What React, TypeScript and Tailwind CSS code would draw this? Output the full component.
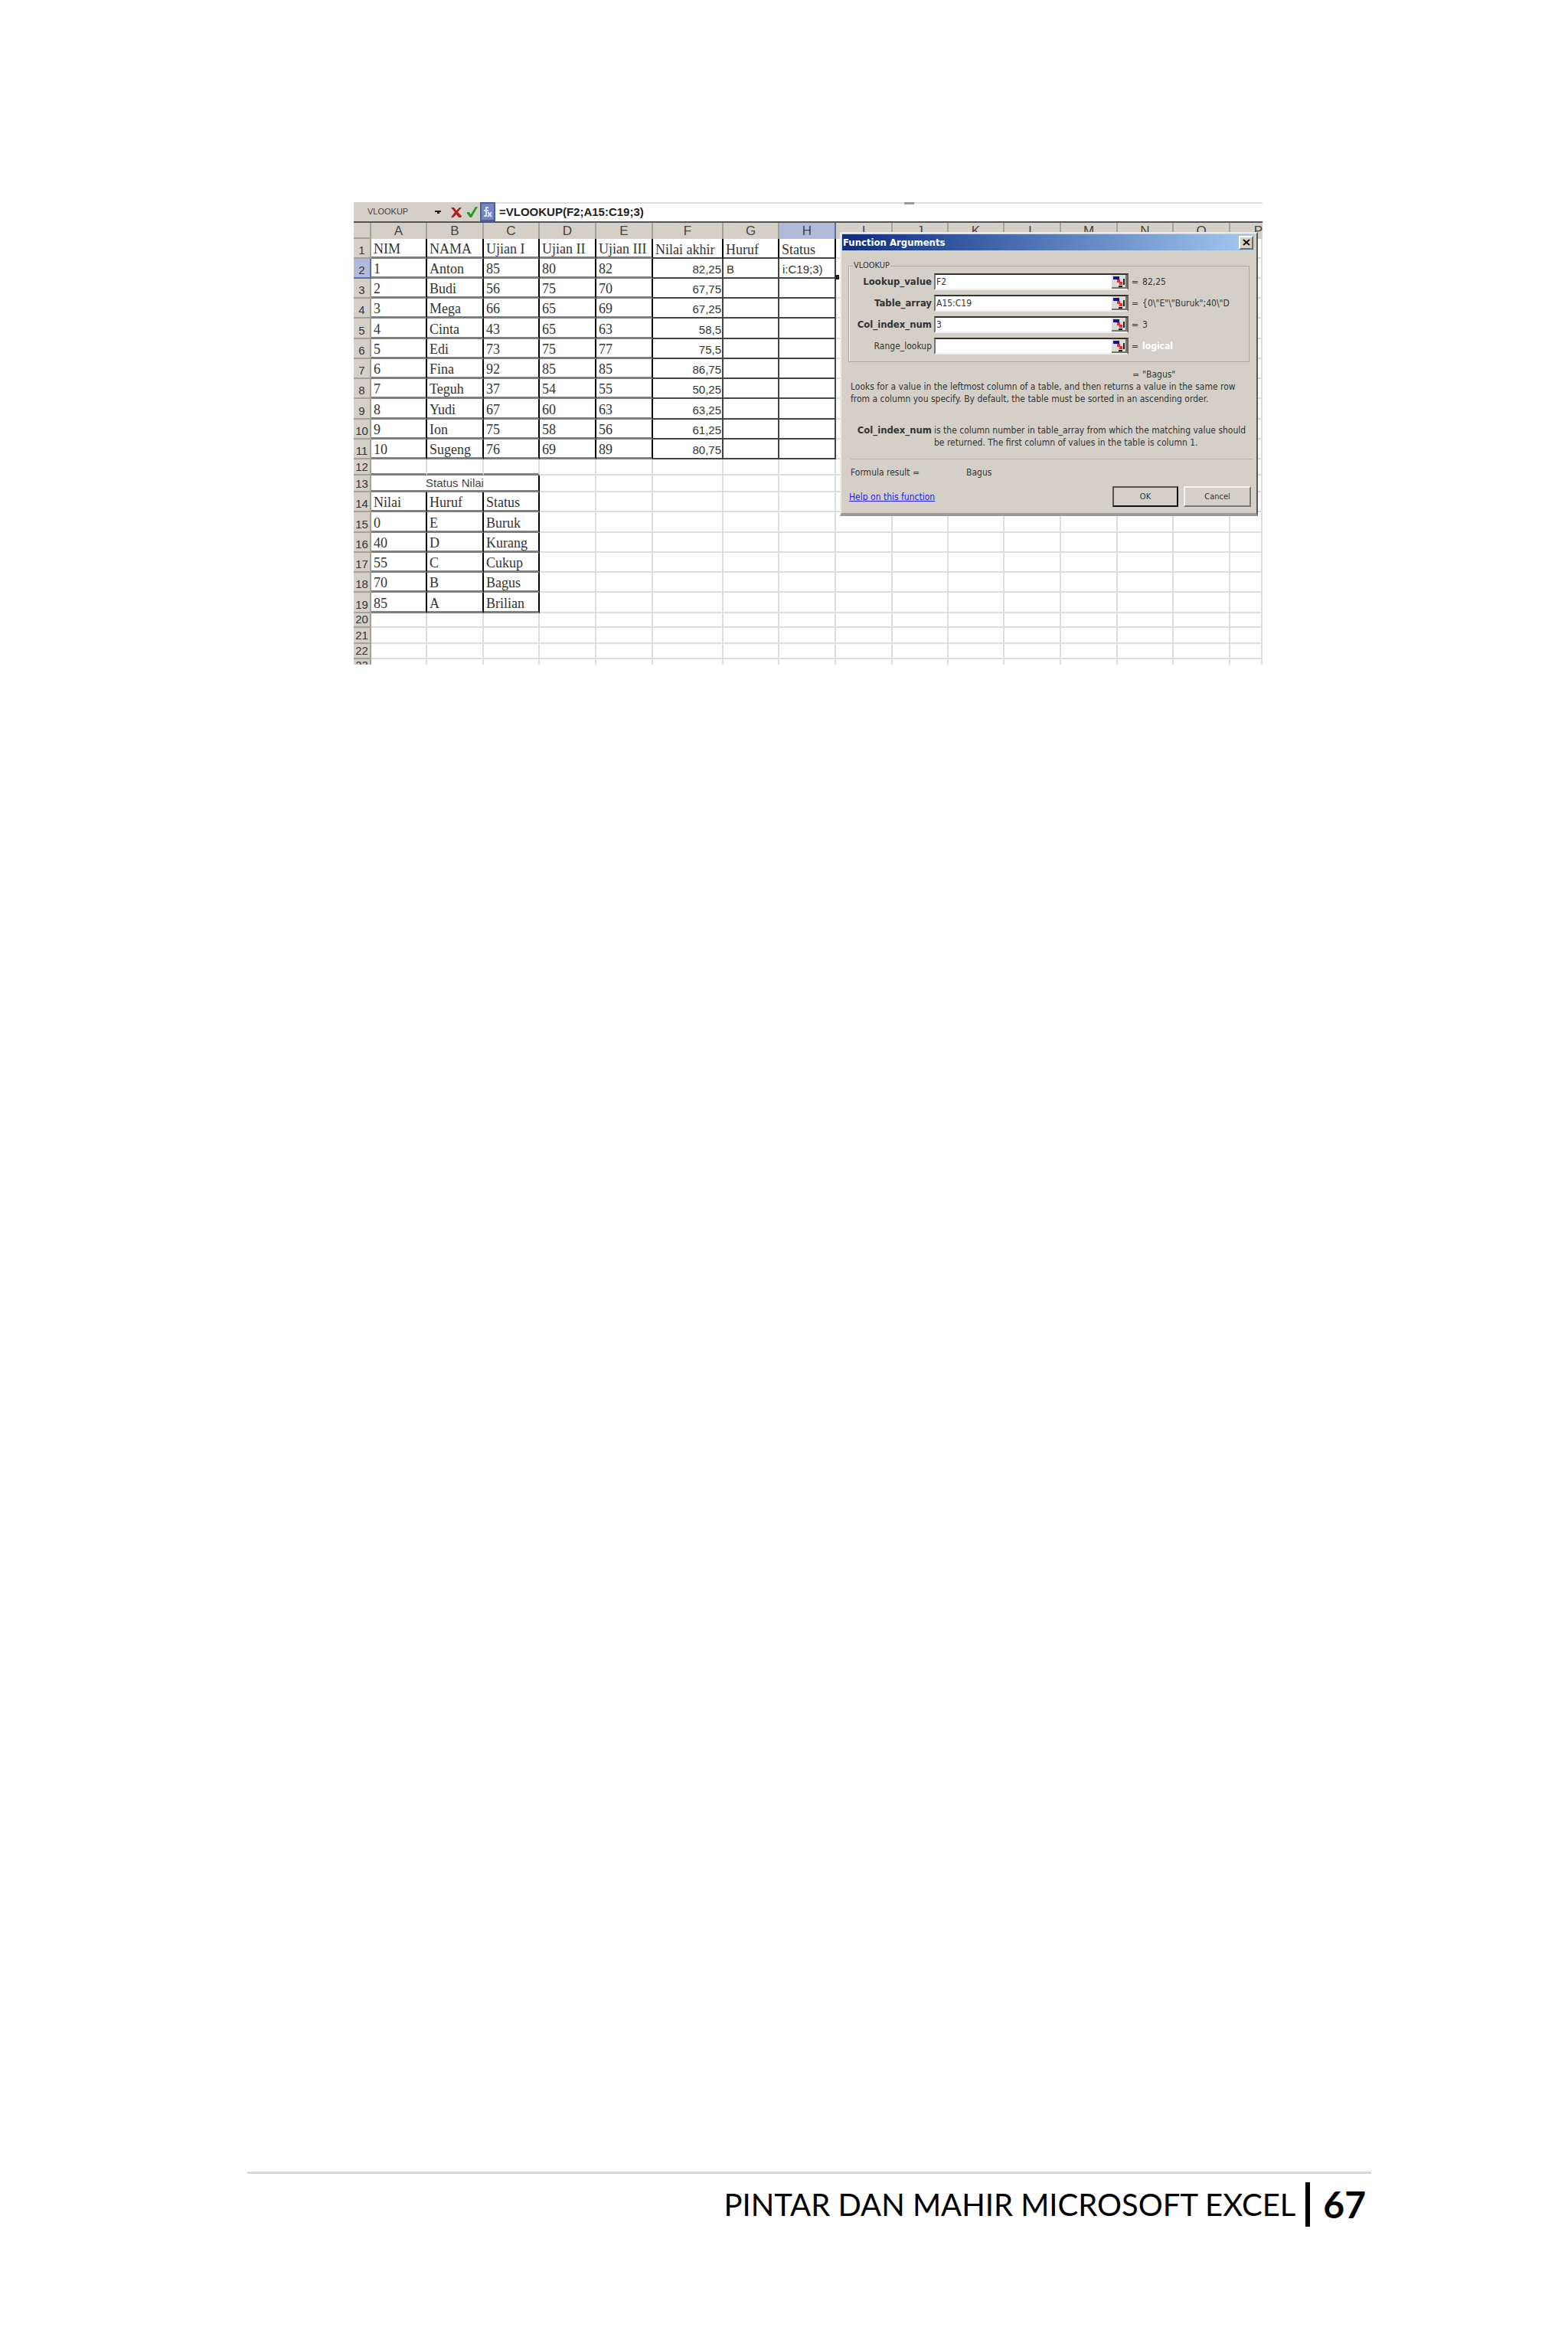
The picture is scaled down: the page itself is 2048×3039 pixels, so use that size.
import { Fragment } from "react";

const columns = [
  { name: "A", width: "w-[73px]" },
  { name: "B", width: "w-[74px]" },
  { name: "C", width: "w-[73px]" },
  { name: "D", width: "w-[74px]" },
  { name: "E", width: "w-[74px]" },
  { name: "F", width: "w-[92px]" },
  { name: "G", width: "w-[73px]" },
  { name: "H", width: "w-[74px]" },
  { name: "I", width: "w-[74px]" },
  { name: "J", width: "w-[73px]" },
  { name: "K", width: "w-[73px]" },
  { name: "L", width: "w-[74px]" },
  { name: "M", width: "w-[74px]" },
  { name: "N", width: "w-[73px]" },
  { name: "O", width: "w-[74px]" },
  { name: "P", width: "" },
];

const rows: { h: string; cells: string[] }[] = [
  { h: "h-[26px]", cells: ["NIM", "NAMA", "Ujian I", "Ujian II", "Ujian III", "Nilai akhir", "Huruf", "Status"] },
  { h: "h-[26px]", cells: ["1", "Anton", "85", "80", "82", "82,25", "B", "i:C19;3)"] },
  { h: "h-[26px]", cells: ["2", "Budi", "56", "75", "70", "67,75"] },
  { h: "h-[26px]", cells: ["3", "Mega", "66", "65", "69", "67,25"] },
  { h: "h-[27px]", cells: ["4", "Cinta", "43", "65", "63", "58,5"] },
  { h: "h-[26px]", cells: ["5", "Edi", "73", "75", "77", "75,5"] },
  { h: "h-[26px]", cells: ["6", "Fina", "92", "85", "85", "86,75"] },
  { h: "h-[26px]", cells: ["7", "Teguh", "37", "54", "55", "50,25"] },
  { h: "h-[27px]", cells: ["8", "Yudi", "67", "60", "63", "63,25"] },
  { h: "h-[26px]", cells: ["9", "Ion", "75", "58", "56", "61,25"] },
  { h: "h-[26px]", cells: ["10", "Sugeng", "76", "69", "89", "80,75"] },
  { h: "h-[21px]", cells: [] },
  { h: "h-[22px]", cells: ["Status Nilai"] },
  { h: "h-[26px]", cells: ["Nilai", "Huruf", "Status"] },
  { h: "h-[27px]", cells: ["0", "E", "Buruk"] },
  { h: "h-[26px]", cells: ["40", "D", "Kurang"] },
  { h: "h-[26px]", cells: ["55", "C", "Cukup"] },
  { h: "h-[26px]", cells: ["70", "B", "Bagus"] },
  { h: "h-[27px]", cells: ["85", "A", "Brilian"] },
  { h: "h-[19px]", cells: [] },
  { h: "h-[21px]", cells: [] },
  { h: "h-[20px]", cells: [] },
  { h: "h-[7px]", cells: [] },
];

function cellStyle(row: number, col: number) {
  // scores, columns A-E
  if (row <= 11 && col < 5) {
    return "border-r-2 border-b-3 border-r-black border-b-[#7f7f7f]";
  }
  if (row <= 11 && col < 8) {
    return row === 1
      ? "border-r-2 border-b-2 border-r-black border-b-[#444]"
      : "border-r-2 border-b-2 border-[#444]";
  }
  if (row === 12 && col < 3) {
    return "border-r-2 border-b-3 border-r-[#dedede] border-b-[#7f7f7f]";
  }
  // lookup table, columns A-C
  if (row >= 13 && row <= 19 && col < 3) {
    return "border-r-2 border-b-3 border-r-black border-b-[#7f7f7f]";
  }
  return "border-r-2 border-b-2 border-[#dedede]";
}

function fontStyle(row: number, col: number) {
  if (row > 1 && row < 12 && col === 5) return "pr-px text-right font-['Liberation_Sans',sans-serif] text-[15px]";
  if (row > 1 && row < 12 && col > 5) return "pl-1 font-['Liberation_Sans',sans-serif] text-[15px]";
  return "pl-[3px] font-['Liberation_Serif',serif] text-[18px]";
}

function Row({ index }: { index: number }) {
  const { h, cells } = rows[index];
  const n = index + 1;
  const merged = n === 13;
  const cols = columns.map((_, i) => i).filter((i) => !merged || i > 2);

  return (
    <tr className={h}>
      <th
        scope="row"
        className={`p-0 align-bottom text-[15px] leading-[15px] font-normal text-[#333] ${
          n === 2 ? "border-[#5b6fb5] bg-[#b1bbd9]" : "border-[#a5a299] bg-[#d4d0c8]"
        } ${n === 23 ? "border-r-2" : "border-r-2 border-b-2 pb-[2px]"}`}
      >
        {n === 23 ? <div className="h-[7px] overflow-hidden">23</div> : n}
      </th>
      {merged && (
        <td
          colSpan={3}
          className="border-r-2 border-b-3 border-r-black border-b-[#7f7f7f] p-0 text-center align-bottom text-[15px] leading-[18px] text-[#444]"
        >
          {cells[0]}
        </td>
      )}
      {cols.map((c) => (
        <td
          key={c}
          className={`p-0 align-bottom leading-[18px] whitespace-nowrap text-[#333] ${
            n === 23 ? "border-r-2 border-[#dedede]" : cellStyle(n, c)
          } ${cells[c] && !merged ? "pb-px" : ""} ${fontStyle(n, c)}`}
        >
          {merged ? "" : cells[c]}
        </td>
      ))}
    </tr>
  );
}

function FormulaBar() {
  return (
    <div className="flex h-[27px] items-stretch border-b-2 border-[#555] bg-white">
      <div className="flex w-[165px] items-center bg-[#d4d0c8]">
        <span className="w-[105px] pl-[18px] text-[11px] text-[#444]">VLOOKUP</span>
        <svg viewBox="0 0 10 6" className="h-[6px] w-[10px]">
          <path d="M1 1h8v2H7v2H4V3H1z" fill="#222" />
        </svg>
        <svg viewBox="0 0 16 14" className="ml-[11px] h-[14px] w-[16px]">
          <path d="M1 1l4 0 3 4 4-4h3l-5 6 5 5-1 2h-3l-3-4-4 4H1l5-7z" fill="#b21c24" />
        </svg>
        <svg viewBox="0 0 16 15" className="ml-[5px] h-[15px] w-[16px]">
          <path d="M1 8h3l2 3 6-10h3l-8 14H5L1 10z" fill="#25992b" />
        </svg>
      </div>
      <button type="button" aria-label="Insert function" className="flex w-[20px] items-center justify-center border-2 border-[#4a5fa5] bg-[#7587bd]">
        <svg viewBox="0 0 14 16" className="h-[16px] w-[14px]" fill="none" stroke="#d8e0f4" strokeWidth="2">
          <path d="M8 2H5v11H2M2 6h6M7 8l5 6M12 8l-5 6" />
        </svg>
      </button>
      <div className="flex flex-1 items-center border-t-2 border-[#dedede] pl-[5px] text-[15px] font-bold text-[#222]">
        =VLOOKUP(F2;A15:C19;3)
      </div>
    </div>
  );
}

const args = [
  { id: "lookup", label: "Lookup_value", value: "F2", result: "82,25", bold: true },
  { id: "table", label: "Table_array", value: "A15:C19", result: "{0\\\"E\"\\\"Buruk\";40\\\"D", bold: true },
  { id: "col", label: "Col_index_num", value: "3", result: "3", bold: true },
  { id: "range", label: "Range_lookup", value: "", result: "logical", bold: false },
];

function PickerIcon() {
  return (
    <svg viewBox="0 0 20 18" className="h-[18px] w-[20px]">
      <path d="M0 0h20v18H0z" fill="#dddbd6" />
      <path d="M18 0h2v18H0v-2h18z" fill="#77756f" />
      <path d="M2 2h8v4H2z" fill="#16168a" />
      <path d="M7 6h4v3h3v4h-4v-3H7z" fill="#ef2b2b" />
      <path d="M9 14h5v2H9zM15 5h2v8h-2z" fill="#222" />
    </svg>
  );
}

function FunctionDialog() {
  return (
    <div
      role="dialog"
      aria-labelledby="dialog-title"
      className="absolute top-[39px] right-[6px] left-[635px] h-[371px] border-t-2 border-r-2 border-b-4 border-l-2 border-t-[#eceae5] border-r-[#555] border-b-[#9b9993] border-l-[#eceae5] bg-[#d4d0c8] font-['DejaVu_Sans_Condensed','Noto_Sans',sans-serif] text-[12px] leading-4 text-[#333]"
    >
      <div className="mt-px mr-[3px] ml-px flex h-[21px] items-center justify-between bg-linear-to-r from-[#0f2a80] to-[#a6caf0]">
        <h2 id="dialog-title" className="pl-px text-[13px] font-bold text-white">
          Function Arguments
        </h2>
        <button
          type="button"
          aria-label="Close"
          className="mr-px flex h-[18px] w-[19px] items-center justify-center border-2 border-t-white border-r-[#6f6d68] border-b-[#6f6d68] border-l-white bg-[#d4d0c8]"
        >
          <svg viewBox="0 0 10 9" className="h-[9px] w-[10px]" stroke="#111" strokeWidth="2">
            <path d="M1 1l8 7M9 1l-8 7" />
          </svg>
        </button>
      </div>

      <fieldset className="mx-[9px] mt-[12px] h-[134px] border border-[#aaa79f] shadow-[inset_1px_0_0_#fff]">
        <legend className="ml-[5px] px-px text-[11px]">VLOOKUP</legend>
        <div className="grid grid-cols-[108px_257px_1fr] gap-y-[6px] pt-[2px]">
          {args.map((a) => (
            <Fragment key={a.id}>
              <label htmlFor={a.id} className={`pt-[3px] text-right ${a.bold ? "text-[13px] font-bold" : ""}`}>
                {a.label}
              </label>
              <div className="ml-[3px] flex h-[22px] border-2 border-t-[#333] border-r-[#666] border-b-[#eee] border-l-[#777] bg-white">
                <input id={a.id} defaultValue={a.value} className="min-w-0 flex-1 pl-px outline-none" />
                <button type="button" aria-label={`Pick range for ${a.label}`}>
                  <PickerIcon />
                </button>
              </div>
              <div className="flex gap-[5px] pt-[3px] pl-[4px]">
                <span>=</span>
                <span className={`whitespace-nowrap ${a.id === "range" ? "font-bold text-white" : ""}`}>{a.result}</span>
              </div>
            </Fragment>
          ))}
        </div>
      </fieldset>

      <p className="mt-[8px] ml-[380px] flex gap-[4px]">
        <span>=</span>
        <span>"Bagus"</span>
      </p>
      <p className="ml-[12px] whitespace-nowrap">
        Looks for a value in the leftmost column of a table, and then returns a value in the same row
        <br />
        from a column you specify. By default, the table must be sorted in an ascending order.
      </p>
      <div className="mt-[25px] flex whitespace-nowrap">
        <b className="w-[118px] text-right text-[13px]">Col_index_num</b>
        <p className="ml-[3px]">
          is the column number in table_array from which the matching value should
          <br />
          be returned. The first column of values in the table is column 1.
        </p>
      </div>
      <hr className="mt-[13px] mr-[5px] ml-[12px] border-[#b3b0a8]" />
      <div className="mt-[9px] ml-[12px] flex">
        <span className="w-[151px]">Formula result =</span>
        <output>Bagus</output>
      </div>
      <div className="mt-[10px] mr-[7px] ml-[10px] flex items-center">
        <a href="#help" className="flex-1 text-[#2a22e8] underline">
          Help on this function
        </a>
        <button type="button" className="h-[27px] w-[86px] border-2 border-t-[#555] border-r-[#111] border-b-[#111] border-l-[#555] text-[11px]">
          OK
        </button>
        <button type="button" className="ml-[7px] h-[27px] w-[88px] border-2 border-t-[#f4f3f0] border-r-[#777] border-b-[#777] border-l-[#f4f3f0] text-[11px]">
          Cancel
        </button>
      </div>
    </div>
  );
}

export default function App() {
  return (
    <div className="flex min-h-screen flex-col bg-white pr-[257px] pl-[323px]">
      {/* Worksheet */}
      <main className="relative mt-[264px] mr-[142px] ml-[139px] overflow-hidden font-['Liberation_Sans',sans-serif]">
        <FormulaBar />
        <table className="w-full table-fixed border-separate border-spacing-0">
          <colgroup>
            <col className="w-[23px]" />
            {columns.map((c) => (
              <col key={c.name} className={c.width} />
            ))}
          </colgroup>
          <thead>
            <tr className="h-[21px]">
              <td className="border-r-2 border-b-2 border-[#a5a299] bg-[#d4d0c8] p-0" />
              {columns.map((c) => (
                <th
                  key={c.name}
                  scope="col"
                  className={`p-0 text-[17px] leading-5 font-normal text-[#444] ${
                    c.name === "H" ? "border-r-2 border-[#5b6fb5] bg-[#b1bbd9]" : "border-[#a5a299] bg-[#d4d0c8]"
                  } ${c.name === "P" ? "text-right" : "border-r-2"}`}
                >
                  {c.name}
                </th>
              ))}
            </tr>
          </thead>
          <tbody>
            {rows.map((_, i) => (
              <Row key={i} index={i} />
            ))}
          </tbody>
        </table>
        {/* tab split handle */}
        <div className="absolute top-0 left-[719px] h-[3px] w-[13px] bg-[#999]" />
        {/* fill handle of the active cell */}
        <div className="absolute top-[95px] left-[629px] h-[6px] w-[5px] bg-[#222]" />
        <FunctionDialog />
      </main>

      {/* Page footer */}
      <footer className="mt-auto mb-[131px] flex items-center justify-end border-t-3 border-[#d9d9d9] pt-[11px] pr-[7px] font-['Lato',sans-serif] text-black">
        <p className="text-[40px] leading-[58px]">PINTAR DAN MAHIR MICROSOFT EXCEL</p>
        <span className="ml-[13px] h-[58px] w-[6px] bg-black" />
        <span className="ml-[17px] text-[48px] leading-[58px] font-bold">67</span>
      </footer>
    </div>
  );
}
